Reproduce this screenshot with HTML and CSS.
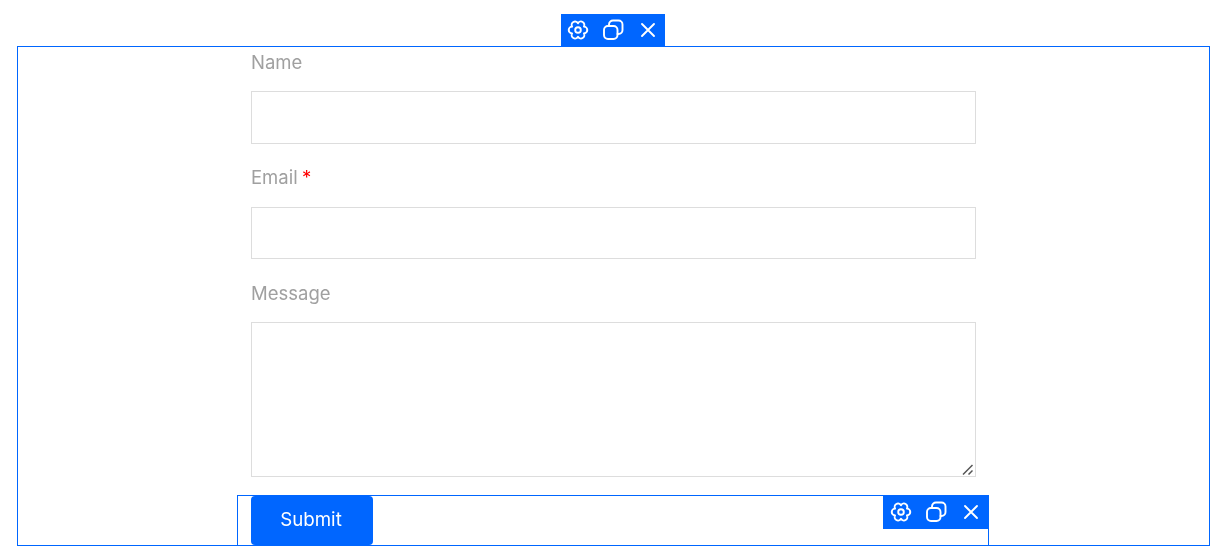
FILE: index.html
```html
<!DOCTYPE html>
<html lang="en">
<head>
<meta charset="utf-8">
<title>Contact form</title>
<link rel="stylesheet" href="styles.css">
</head>
<body>
<section class="section">
  <div class="toolbar toolbar-top">
    <button class="tool" type="button" aria-label="Settings"><svg viewBox="0 0 24 24"><path d="M17.89 15.400A3.400 3.400 0 0 0 17.890 8.600A3.400 3.400 0 0 0 12 5.200A3.400 3.400 0 0 0 6.110 8.600A3.400 3.400 0 0 0 6.110 15.400A3.400 3.400 0 0 0 12 18.800A3.400 3.400 0 0 0 17.890 15.400Z"/><circle cx="12" cy="12" r="2.800"/></svg></button>
    <button class="tool" type="button" aria-label="Duplicate"><svg viewBox="0 0 24 24"><rect x="3" y="8" width="13.5" height="13" rx="4"/><path d="M8 8V6.500a4 4 0 0 1 4-4h5.500a4 4 0 0 1 4 4v5.500a4 4 0 0 1-4 4h-1"/></svg></button>
    <button class="tool" type="button" aria-label="Remove"><svg viewBox="0 0 24 24"><path d="M6 6l12 12M18 6L6 18"/></svg></button>
  </div>
  <form class="form">
    <div class="field field-name">
      <label class="label" for="name">Name</label>
      <input class="input" id="name" type="text">
    </div>
    <div class="field field-email">
      <label class="label" for="email">Email <span class="req">*</span></label>
      <input class="input input-email" id="email" type="email">
    </div>
    <div class="field field-message">
      <label class="label" for="message">Message</label>
      <textarea class="input textarea" id="message"></textarea>
      <svg class="grip" viewBox="0 0 11 11"><path d="M1 10.500L10.500 1M6.500 10.500L10.500 6.500"/></svg>
    </div>
    <div class="submit-row">
      <div class="toolbar toolbar-inner">
        <button class="tool" type="button" aria-label="Settings"><svg viewBox="0 0 24 24"><path d="M17.89 15.400A3.400 3.400 0 0 0 17.890 8.600A3.400 3.400 0 0 0 12 5.200A3.400 3.400 0 0 0 6.110 8.600A3.400 3.400 0 0 0 6.110 15.400A3.400 3.400 0 0 0 12 18.800A3.400 3.400 0 0 0 17.890 15.400Z"/><circle cx="12" cy="12" r="2.800"/></svg></button>
        <button class="tool" type="button" aria-label="Duplicate"><svg viewBox="0 0 24 24"><rect x="3" y="8" width="13.5" height="13" rx="4"/><path d="M8 8V6.500a4 4 0 0 1 4-4h5.500a4 4 0 0 1 4 4v5.500a4 4 0 0 1-4 4h-1"/></svg></button>
        <button class="tool" type="button" aria-label="Remove"><svg viewBox="0 0 24 24"><path d="M6 6l12 12M18 6L6 18"/></svg></button>
      </div>
      <button class="submit" type="submit">Submit</button>
    </div>
  </form>
</section>
</body>
</html>
```
FILE: styles.css
```css
html, body {
  margin: 0;
  background: #fff;
  overflow: hidden;
}
body {
  height: 558px;
  padding: 46px 18px 0 17px;
  box-sizing: border-box;
  font-family: Inter, "Liberation Sans", sans-serif;
}
.section {
  position: relative;
  box-sizing: border-box;
  height: 500px;
  border: 1px solid #0066ff;
  will-change: transform;
}
.toolbar {
  position: absolute;
  display: flex;
  background: #0066ff;
  height: 33px;
  width: 104px;
  justify-content: center;
  align-items: flex-start;
}
.toolbar-top {
  top: -33px;
  left: 543px;
}
.toolbar-inner {
  top: -1px;
  right: -1px;
  width: 106px;
  height: 34px;
  align-items: center;
}
.tool {
  width: 35px;
  height: 32px;
  padding: 0;
  border: 0;
  background: none;
  display: flex;
  align-items: center;
  justify-content: center;
}
.tool svg {
  flex: none;
  width: 24px;
  height: 24px;
  fill: none;
  stroke: #fff;
  stroke-width: 1.9;
  stroke-linecap: round;
  stroke-linejoin: round;
}
.form {
  width: 725px;
  margin-left: 233px;
}
.field {
  display: flex;
  flex-direction: column;
}
.field-email {
  margin-top: 18px;
}
.field-message {
  position: relative;
  margin-top: 19px;
}
.label {
  font-size: 18.5px;
  line-height: 30px;
  color: #a0a0a0;
  margin-bottom: 15px;
}
.field-name .label {
  margin-bottom: 14px;
}
.field-message .label {
  margin-bottom: 14px;
}
.req {
  margin-left: -1px;
  color: #f00;
}
.input {
  box-sizing: border-box;
  display: block;
  width: 725px;
  height: 53px;
  margin: 0;
  padding: 0 12px;
  border: 1px solid #ddd;
  background: #fff;
  border-radius: 0;
  outline: 0;
}
.input-email {
  height: 52px;
}
.textarea {
  height: 155px;
  resize: none;
}
.grip {
  position: absolute;
  right: 3px;
  bottom: 2px;
  width: 11px;
  height: 11px;
  fill: none;
  stroke: #555;
  stroke-width: 1.5;
}
.submit-row {
  position: relative;
  box-sizing: border-box;
  width: 752px;
  height: 51px;
  margin: 18px 0 0 -14px;
  padding: 0 0 0 13px;
  border: 1px solid #0066ff;
  border-bottom: 0;
}
.submit {
  display: block;
  width: 122px;
  height: 49px;
  padding: 0 2px 2px 0;
  border: 0;
  border-radius: 4px;
  background: #0066ff;
  color: #fff;
  font-family: inherit;
  font-size: 18.72px;
}
```
